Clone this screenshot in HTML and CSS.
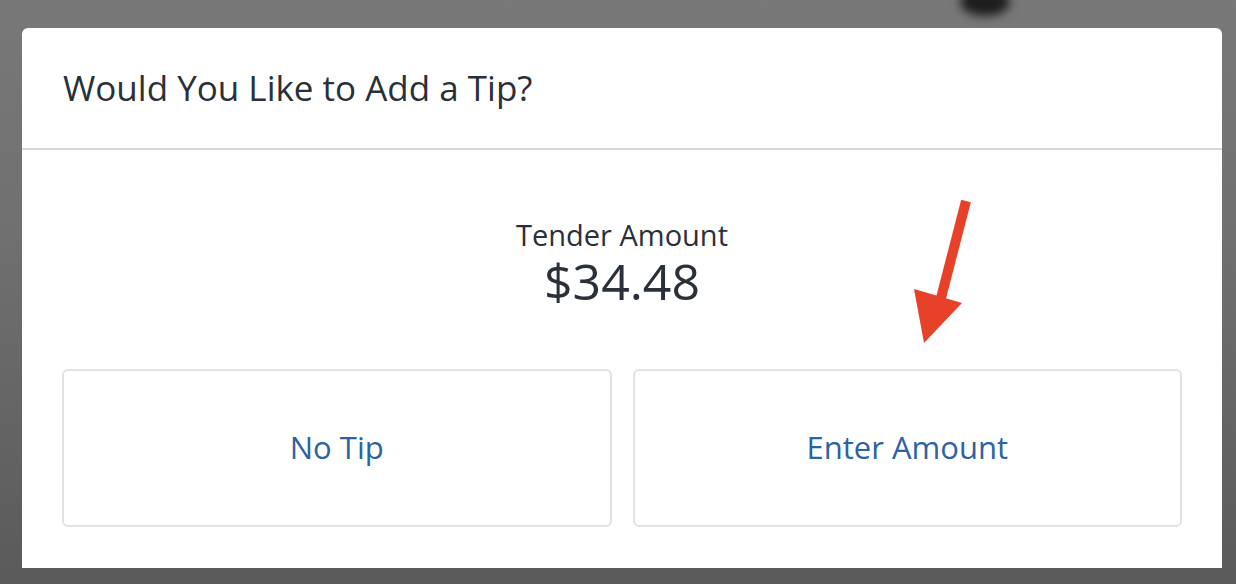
FILE: index.html
```html
<!DOCTYPE html>
<html>
<head>
<meta charset="utf-8">
<link rel="stylesheet" href="styles.css">
</head>
<body>
<div class="backdrop">
  <div class="blob"></div>
  <div class="modal">
    <div class="modal-header">
      <h1 class="title">Would You Like to Add a Tip?</h1>
    </div>
    <div class="modal-body">
      <div class="amount">
        <div class="amount-label">Tender Amount</div>
        <div class="amount-value">$34.48</div>
      </div>
      <div class="choices">
        <button class="choice">No Tip</button>
        <button class="choice">Enter Amount</button>
      </div>
    </div>
  </div>
  <svg class="arrow" width="80" height="160" viewBox="0 0 80 160">
    <line x1="61" y1="11" x2="36" y2="108" stroke="#e8412a" stroke-width="10"/>
    <polygon points="9,99 57,113 19,153" fill="#e8412a"/>
  </svg>
</div>
</body>
</html>
```
FILE: styles.css
```css
html, body {
  margin: 0;
  padding: 0;
}
body {
  width: 1236px;
  height: 584px;
  overflow: hidden;
  font-family: "Open Sans", "Noto Sans", sans-serif;
}
.backdrop {
  position: relative;
  width: 1236px;
  height: 584px;
  padding-top: 28px;
  box-sizing: border-box;
  background: linear-gradient(180deg, #787878 0%, #707070 40%, #5a5a5a 100%);
}
.blob {
  position: absolute;
  left: 960px;
  top: -12px;
  width: 50px;
  height: 28px;
  border-radius: 50%;
  background: #1e1e1e;
  filter: blur(5px);
}
.modal {
  margin-left: 22px;
  width: 1200px;
  height: 540px;
  background: #fff;
  border-radius: 6px 6px 0 0;
  display: flex;
  flex-direction: column;
}
.modal-header {
  height: 118px;
  padding-bottom: 2px;
  border-bottom: 2px solid #d6d6d6;
  display: flex;
  align-items: center;
  padding-left: 41px;
}
.title {
  margin: 0;
  font-weight: 400;
  font-size: 35px;
  color: #2a3038;
}
.modal-body {
  flex: 1;
  padding: 67px 40px 41px;
  display: flex;
  flex-direction: column;
}
.amount {
  display: flex;
  flex-direction: column;
  align-items: center;
  color: #2a3038;
}
.amount-label {
  font-size: 29px;
  line-height: 36px;
}
.amount-value {
  font-size: 50px;
  line-height: 56px;
}
.choices {
  margin-top: auto;
  display: flex;
  gap: 21px;
}
.choice {
  flex: 1;
  height: 158px;
  background: #fff;
  border: 2px solid #e2e2e2;
  border-radius: 6px;
  padding-bottom: 4px;
  font-family: inherit;
  font-size: 31px;
  color: #2d62a3;
}
.arrow {
  position: absolute;
  left: 905px;
  top: 190px;
}
```
